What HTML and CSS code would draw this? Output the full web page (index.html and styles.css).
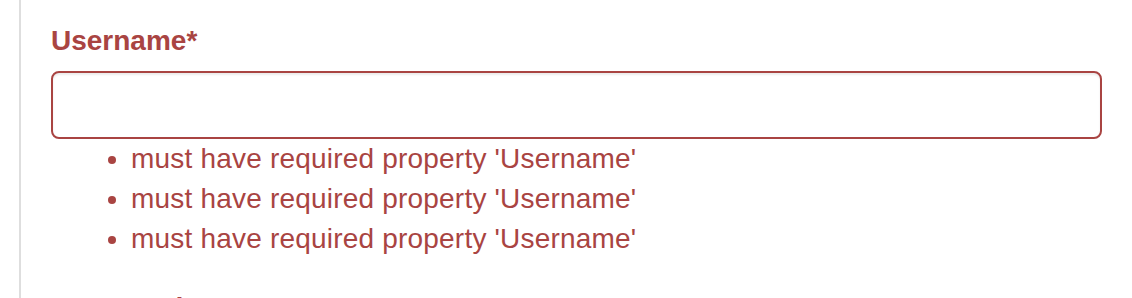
FILE: index.html
```html
<!DOCTYPE html>
<html>
<head>
<meta charset="utf-8">
<link rel="stylesheet" href="styles.css">
</head>
<body>
<div class="panel">
  <div class="form-group has-error">
    <label class="control-label">Username*</label>
    <input class="form-control" type="text">
    <ul class="error-list">
      <li>must have required property 'Username'</li>
      <li>must have required property 'Username'</li>
      <li>must have required property 'Username'</li>
    </ul>
  </div>
  <div class="form-group has-error">
    <label class="control-label">Password*</label>
    <input class="form-control" type="password">
  </div>
</div>
</body>
</html>
```
FILE: styles.css
```css
html, body {
  margin: 0;
  padding: 0;
  background: #fff;
  overflow: hidden;
}
body {
  font-family: "Liberation Sans", Arial, Helvetica, sans-serif;
  font-size: 28px;
  line-height: 40px;
  color: #333;
  height: 298px;
}
.panel {
  margin-left: 19px;
  border-left: 2px solid #dedede;
  padding: 21px 30px 0 30px;
  min-height: 400px;
}
.form-group {
  display: flex;
  flex-direction: column;
  margin-bottom: 29px;
}
.control-label {
  font-weight: bold;
  color: #a94442;
  margin-bottom: 10px;
}
.form-control {
  box-sizing: border-box;
  height: 68px;
  width: 100%;
  border: 2px solid #a94442;
  border-radius: 8px;
  background: #fff;
  box-shadow: inset 0 2px 2px rgba(0,0,0,.075);
  margin: 0;
  padding: 12px 24px;
  font: inherit;
  outline: none;
}
.error-list {
  margin: 0;
  padding-left: 80px;
  color: #a94442;
  letter-spacing: 0.2px;
}
```
